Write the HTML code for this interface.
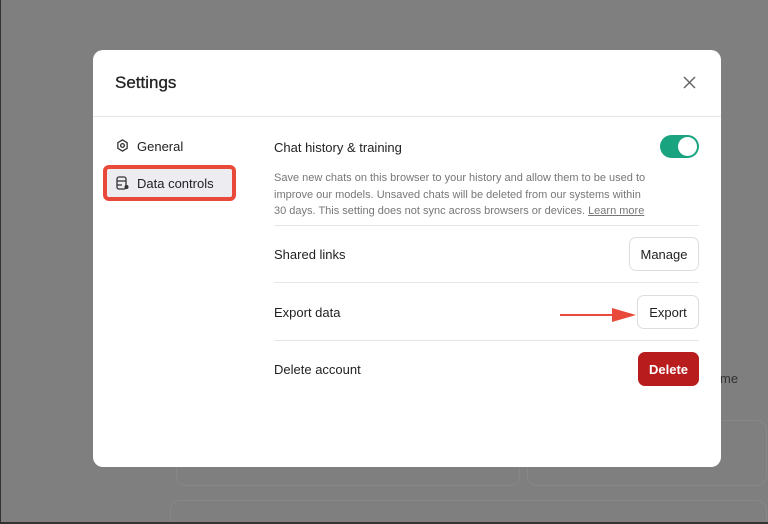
<!DOCTYPE html>
<html><head><meta charset="utf-8"><style>
*{box-sizing:border-box;margin:0;padding:0}
html,body{width:768px;height:524px;overflow:hidden}
body{background:#7f7f7f;font-family:"Liberation Sans",sans-serif;position:relative}
.bg{position:absolute;border:1px solid #878787;border-radius:10px}
.modal{position:absolute;left:93px;top:50px;width:628px;height:417px;background:#fff;border-radius:10px}
.t{position:absolute;color:#222;font-size:13px}
.hr{position:absolute;height:1px;background:#e6e6e6}
.btn{position:absolute;border:1px solid #ddd;border-radius:7px;font-size:13px;color:#222;display:flex;align-items:center;justify-content:center;background:#fff}
.small{position:absolute;left:274px;top:170px;width:380px;font-size:11px;line-height:16.5px;color:#777}
</style></head><body>
<div style="position:absolute;left:0;top:0;width:1px;height:524px;background:#333"></div>
<div style="position:absolute;left:0;top:522px;width:768px;height:2px;background:#333"></div>
<div class="bg" style="left:176px;top:420px;width:344px;height:66px"></div>
<div class="bg" style="left:527px;top:420px;width:240px;height:66px"></div>
<div class="bg" style="left:170px;top:500px;width:597px;height:22px;border-bottom:none;border-radius:10px 10px 0 0"></div>
<div class="t" style="left:720px;top:371px;color:#333;font-size:13px">me</div>
<div class="modal"></div>
<div class="t" style="left:115px;top:73px;font-size:17px;color:#222;-webkit-text-stroke:0.3px #222">Settings</div>
<svg style="position:absolute;left:683px;top:76px" width="13" height="13" viewBox="0 0 13 13"><path d="M1 1L12 12M12 1L1 12" stroke="#666" stroke-width="1.5"/></svg>
<div class="hr" style="left:93px;top:116px;width:628px"></div>
<svg style="position:absolute;left:116px;top:139px" width="13" height="13" viewBox="0 0 14 14"><circle cx="7" cy="7" r="2" fill="none" stroke="#333" stroke-width="1.4"/><path d="M7 1l5 3v6l-5 3-5-3V4z" fill="none" stroke="#333" stroke-width="1.4"/></svg>
<div class="t" style="left:137px;top:139px">General</div>
<div style="position:absolute;left:103px;top:165px;width:133px;height:36px;border:4px solid #e8493a;border-radius:6px;background:#ececf1"></div>
<svg style="position:absolute;left:116px;top:176px" width="13" height="14" viewBox="0 0 13 14"><rect x="1" y="1" width="9" height="12" rx="2" fill="none" stroke="#333" stroke-width="1.3"/><path d="M1 5h9M1 9h5" stroke="#333" stroke-width="1.2"/><circle cx="10.5" cy="11" r="2" fill="#333"/></svg>
<div class="t" style="left:137px;top:176px">Data controls</div>
<div class="t" style="left:274px;top:140px">Chat history &amp; training</div>
<div style="position:absolute;left:660px;top:135px;width:39px;height:23px;border-radius:12px;background:#19a37f"></div>
<div style="position:absolute;left:678px;top:137px;width:19px;height:19px;border-radius:50%;background:#fff"></div>
<div class="small">Save new chats on this browser to your history and allow them to be used to improve our models. Unsaved chats will be deleted from our systems within 30 days. This setting does not sync across browsers or devices. <u>Learn more</u></div>
<div class="hr" style="left:274px;top:225px;width:425px"></div>
<div class="t" style="left:274px;top:247px">Shared links</div>
<div class="btn" style="left:629px;top:237px;width:70px;height:34px">Manage</div>
<div class="hr" style="left:274px;top:282px;width:425px"></div>
<div class="t" style="left:274px;top:305px">Export data</div>
<div class="btn" style="left:637px;top:295px;width:62px;height:34px">Export</div>
<svg style="position:absolute;left:558px;top:305px" width="80" height="20" viewBox="0 0 80 20"><path d="M2 10H60" stroke="#e8493a" stroke-width="2"/><path d="M54 3L78 10L54 17z" fill="#e8493a"/></svg>
<div class="hr" style="left:274px;top:340px;width:425px"></div>
<div class="t" style="left:274px;top:362px">Delete account</div>
<div class="btn" style="left:638px;top:352px;width:61px;height:34px;background:#b91c1c;border-color:#b91c1c;color:#fff;font-weight:bold">Delete</div>
</body></html>
